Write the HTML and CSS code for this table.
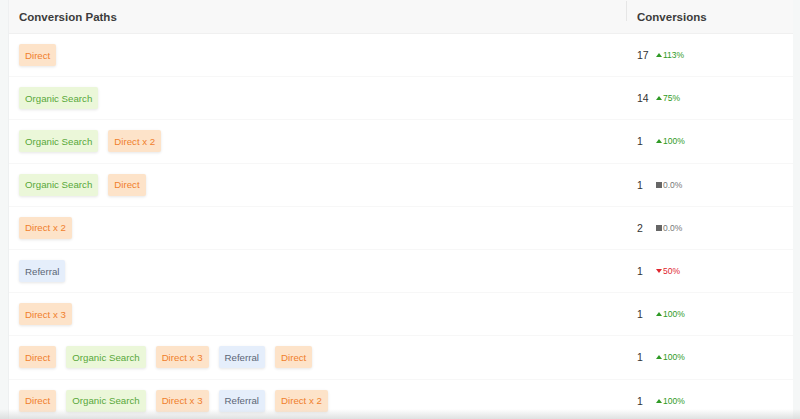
FILE: index.html
```html
<!DOCTYPE html>
<html>
<head>
<meta charset="utf-8">
<link rel="stylesheet" href="styles.css">
</head>
<body>
<div class="page">
  <div class="card">
    <div class="head">
      <div class="c1">Conversion Paths</div>
      <div class="c2">Conversions</div>
    </div>
    <div class="row">
      <div class="c1"><span class="b o">Direct</span></div>
      <div class="c2"><span class="n">17</span><span class="d up"><i class="tri"></i>113%</span></div>
    </div>
    <div class="row">
      <div class="c1"><span class="b g">Organic Search</span></div>
      <div class="c2"><span class="n">14</span><span class="d up"><i class="tri"></i>75%</span></div>
    </div>
    <div class="row">
      <div class="c1"><span class="b g">Organic Search</span><span class="b o">Direct x 2</span></div>
      <div class="c2"><span class="n">1</span><span class="d up"><i class="tri"></i>100%</span></div>
    </div>
    <div class="row">
      <div class="c1"><span class="b g">Organic Search</span><span class="b o">Direct</span></div>
      <div class="c2"><span class="n">1</span><span class="d flat"><i class="sq"></i>0.0%</span></div>
    </div>
    <div class="row">
      <div class="c1"><span class="b o">Direct x 2</span></div>
      <div class="c2"><span class="n">2</span><span class="d flat"><i class="sq"></i>0.0%</span></div>
    </div>
    <div class="row">
      <div class="c1"><span class="b r">Referral</span></div>
      <div class="c2"><span class="n">1</span><span class="d down"><i class="tri dn"></i>50%</span></div>
    </div>
    <div class="row">
      <div class="c1"><span class="b o">Direct x 3</span></div>
      <div class="c2"><span class="n">1</span><span class="d up"><i class="tri"></i>100%</span></div>
    </div>
    <div class="row">
      <div class="c1"><span class="b o">Direct</span><span class="b g">Organic Search</span><span class="b o">Direct x 3</span><span class="b r">Referral</span><span class="b o">Direct</span></div>
      <div class="c2"><span class="n">1</span><span class="d up"><i class="tri"></i>100%</span></div>
    </div>
    <div class="row">
      <div class="c1"><span class="b o">Direct</span><span class="b g">Organic Search</span><span class="b o">Direct x 3</span><span class="b r">Referral</span><span class="b o">Direct x 2</span></div>
      <div class="c2"><span class="n">1</span><span class="d up"><i class="tri"></i>100%</span></div>
    </div>
  </div>
</div>
<div class="fade"></div>
</body>
</html>
```
FILE: styles.css
```css
html, body {
  margin: 0;
  padding: 0;
  background: #f5f7f7;
  font-family: "Liberation Sans", Arial, sans-serif;
  overflow: hidden;
  height: 419px;
}
.page {
  padding-left: 8px;
  width: 785px;
}
.card {
  background: #fff;
  border-left: 1px solid #eef0f1;
}
.head {
  display: flex;
  height: 33px;
  align-items: center;
  background: #f8f8f8;
  border-bottom: 1px solid #f0f0f0;
  font-size: 11.5px;
  font-weight: 600;
  color: #3c3c3c;
}
.c1 {
  flex: 0 0 617px;
  padding-left: 10px;
  box-sizing: border-box;
  display: flex;
  align-items: center;
  gap: 10px;
}
.c2 {
  flex: 1;
  padding-left: 11px;
  display: flex;
  align-items: center;
  position: relative;
}
.head .c2::before {
  content: "";
  position: absolute;
  left: 0;
  top: -10px;
  height: 20px;
  border-left: 1px solid #e6e6e6;
}
.row {
  display: flex;
  height: 43.2px;
  align-items: center;
  border-bottom: 1px solid #f7f7f7;
  box-sizing: border-box;
}
.b {
  display: inline-flex;
  align-items: center;
  height: 22px;
  padding: 0 6px;
  font-size: 9.7px;
  border-radius: 2px;
  box-shadow: 0 1px 3px rgba(0,0,0,0.10);
}
.o { background: #fde3c9; color: #f0802c; }
.g { background: #ebf7d9; color: #58a83a; }
.r { background: #e5eefb; color: #5b6676; }
.n {
  font-size: 10.5px;
  color: #333;
  width: 19px;
}
.d {
  display: inline-flex;
  align-items: center;
  font-size: 8.5px;
}
.up { color: #2f9a25; }
.down { color: #e0262f; }
.flat { color: #777; }
.tri {
  width: 0;
  height: 0;
  border-left: 3.5px solid transparent;
  border-right: 3.5px solid transparent;
  border-bottom: 4px solid #2f9a25;
  margin-right: 1px;
}
.tri.dn {
  border-bottom: none;
  border-top: 4px solid #e0262f;
}
.sq {
  width: 6px;
  height: 6px;
  background: #666;
  margin-right: 1px;
}
.fade {
  position: absolute;
  left: 0;
  right: 0;
  bottom: 0;
  height: 10px;
  background: linear-gradient(rgba(230,232,232,0), rgba(215,218,218,0.8));
}
```
